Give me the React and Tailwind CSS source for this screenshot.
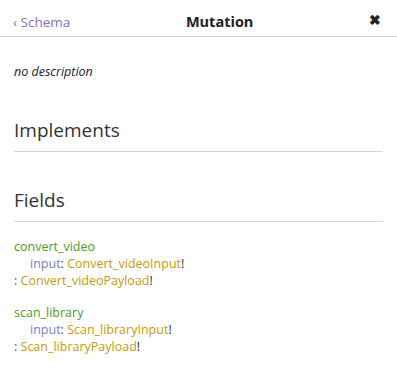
import React from 'react';

const fields = [
  { name: 'convert_video', arg: 'input', argType: 'Convert_videoInput', type: 'Convert_videoPayload' },
  { name: 'scan_library', arg: 'input', argType: 'Scan_libraryInput', type: 'Scan_libraryPayload' },
];

function Field({ field }) {
  return (
    <div className="text-[12.5px] leading-[17px]">
      <div className="text-[#4e9d1c]">{field.name}</div>
      <div className="pl-[16px]">
        <span className="text-[#8078d6]">{field.arg}</span>
        <span className="text-[#555]">: </span>
        <span className="text-[#c99a06]">{field.argType}</span>
        <span className="text-[#333]">!</span>
      </div>
      <div>
        <span className="text-[#555]">: </span>
        <span className="text-[#c99a06]">{field.type}</span>
        <span className="text-[#333]">!</span>
      </div>
    </div>
  );
}

export default function App() {
  return (
    <div className="w-[397px] h-[369px] bg-white text-[#333] font-['Open_Sans',sans-serif] overflow-hidden">
      <div className="h-[37px] border-b border-[#d6d6d6] flex items-center pt-[8px] pl-[13px] pr-[16px]">
        <span className="text-[13.5px] text-[#8a6bd8]">‹ Schema</span>
        <span className="flex-1 text-center text-[14.5px] font-bold text-[#222]">Mutation</span>
        <span className="text-[14px] font-bold text-[#222] leading-none -mt-[4px]">✖</span>
      </div>
      <div className="px-[14px]">
        <div className="pt-[26px] text-[12.5px] leading-[17px] italic text-[#222]">no description</div>
        <div className="mt-[36px] pb-[7px] border-b border-[#d6d6d6] text-[19px] text-[#333] leading-[28px]">Implements</div>
        <div className="mt-[34px] pb-[7px] border-b border-[#d6d6d6] text-[19px] text-[#333] leading-[28px]">Fields</div>
        <div className="mt-[16px] flex flex-col gap-[15px]">
          {fields.map((f) => (
            <Field key={f.name} field={f} />
          ))}
        </div>
      </div>
    </div>
  );
}
